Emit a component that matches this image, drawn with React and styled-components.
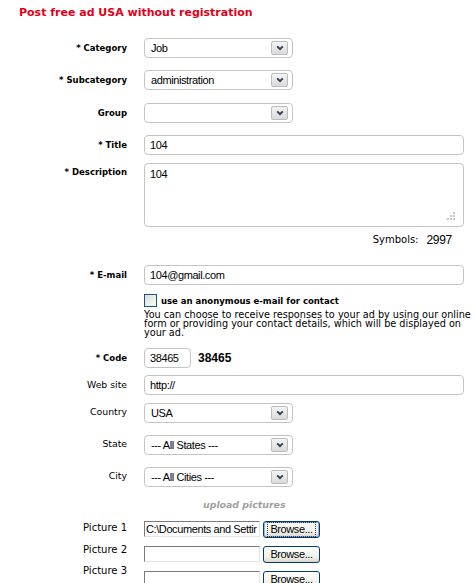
import React from 'react';
import styled, { createGlobalStyle } from 'styled-components';

const GlobalStyle = createGlobalStyle`
  body {
    margin: 0;
    background: #fff;
    font-family: "DejaVu Sans", Verdana, sans-serif;
    color: #000;
  }
`;

const arial = `
  font-family: "Liberation Sans", Arial, sans-serif;
  font-size: 11px;
  letter-spacing: -0.4px;
  color: #000;
`;

const Page = styled.div`
  width: 474px;
  height: 583px;
  overflow: hidden;
  padding-top: 7px;
  box-sizing: border-box;
`;

const Heading = styled.h1`
  margin: 0 0 0 19px;
  font-size: 11px;
  line-height: 12px;
  font-weight: bold;
  color: #e2001a;
`;

const Row = styled.div`
  display: flex;
  align-items: ${p => (p.$top ? 'flex-start' : 'center')};
  margin-top: ${p => p.$mt || 0}px;
`;

const Label = styled.div`
  width: 127px;
  flex-shrink: 0;
  text-align: right;
  font-size: ${p => (p.$plain ? '9.3px' : '8.5px')};
  font-weight: ${p => (p.$plain ? 'normal' : 'bold')};
  line-height: 12px;
  padding-top: ${p => p.$pt || 0}px;
  margin-top: ${p => p.$shift || 0}px;
`;

const Field = styled.div`
  margin-left: 17px;
  display: flex;
  align-items: center;
`;

const SelectBox = styled.div`
  width: 149px;
  height: 20px;
  box-sizing: border-box;
  border: 1px solid #c4c4c4;
  border-radius: 4px;
  background: #fff;
  display: flex;
  align-items: center;
  padding: 0 4px 0 6px;
  ${arial}
`;

const SelectText = styled.span`
  flex: 1;
  white-space: nowrap;
  overflow: hidden;
`;

const ArrowBtn = styled.span`
  width: 17px;
  height: 14px;
  box-sizing: border-box;
  border: 1px solid #bcbcbc;
  border-radius: 2px;
  background: linear-gradient(#f4f4f4, #dadada);
  display: flex;
  align-items: center;
  justify-content: center;
`;

const TextInput = styled.input`
  width: ${p => p.$w}px;
  height: 20px;
  box-sizing: border-box;
  border: 1px solid #c4c4c4;
  border-radius: 4px;
  padding: 0 5px;
  margin: 0;
  ${arial}
  outline: none;
`;

const AreaWrap = styled.div`
  position: relative;
  width: 320px;
  height: 64px;
`;

const TextArea = styled.textarea`
  width: 100%;
  height: 100%;
  box-sizing: border-box;
  border: 1px solid #c4c4c4;
  border-radius: 4px;
  padding: 4px 5px;
  margin: 0;
  resize: none;
  ${arial}
  outline: none;
  display: block;
`;

const Grip = styled.svg`
  position: absolute;
  right: 9px;
  bottom: 7px;
`;

const Counter = styled.div`
  margin-top: 7px;
  height: 12px;
  display: flex;
  justify-content: flex-end;
  align-items: center;
  padding-right: 22px;
  font-size: 10px;
  line-height: 12px;
`;

const CountNum = styled.span`
  margin-left: 8px;
  font-family: "Liberation Sans", Arial, sans-serif;
  font-size: 12px;
  letter-spacing: -0.3px;
`;

const Check = styled.span`
  width: 13px;
  height: 13px;
  box-sizing: border-box;
  border: 1px solid #1c5180;
  background: linear-gradient(135deg, #dcdcd7, #fbfbf9);
  display: inline-block;
`;

const CheckText = styled.span`
  margin-left: 4px;
  font-size: 8.5px;
  font-weight: bold;
  line-height: 12px;
`;

const Note = styled.p`
  margin: 3px 0 0 144px;
  font-size: 9.7px;
  line-height: 9px;
  width: 330px;
  white-space: pre-line;
`;

const CodeEcho = styled.span`
  margin-left: 7px;
  font-family: "Liberation Sans", Arial, sans-serif;
  font-size: 12px;
  font-weight: bold;
`;

const Section = styled.div`
  margin: 12px 0 0 203px;
  font-size: 9.4px;
  line-height: 12px;
  font-weight: bold;
  font-style: italic;
  color: #a0a0a0;
`;

const Pictures = styled.div`
  display: flex;
  margin-top: 6px;
`;

const PicLabels = styled.div`
  width: 127px;
  text-align: right;
  font-size: 10px;
  line-height: 21.5px;
`;

const PicFields = styled.div`
  margin-left: 17px;
  padding-top: 4px;
  display: flex;
  flex-direction: column;
  gap: 9px;
`;

const FileRow = styled.div`
  display: flex;
  align-items: center;
  height: 16px;
`;

const FileBox = styled.div`
  width: 116px;
  height: 16px;
  box-sizing: border-box;
  border-top: 1px solid #7a7a7a;
  border-left: 1px solid #7a7a7a;
  border-right: 1px solid #e4e4e4;
  border-bottom: 1px solid #e4e4e4;
  ${arial}
  line-height: 14px;
  white-space: nowrap;
  overflow: hidden;
  padding-left: 1px;
`;

const Browse = styled.span`
  margin-left: 3px;
  width: 57px;
  height: 17px;
  box-sizing: border-box;
  border: 1px solid #003c74;
  border-radius: 3px;
  background: linear-gradient(#ffffff, #f0f0ea 70%, #d8d4c8);
  box-shadow: ${p => (p.$focus ? 'inset 0 0 0 1px #97b7ea' : 'none')};
  display: flex;
  align-items: center;
  justify-content: center;
  ${arial}
  line-height: 13px;
`;

const BrowseText = styled.span`
  padding: 0 2px;
  outline: ${p => (p.$focus ? '1px dotted #333' : 'none')};
`;

const Chevron = () => (
  <svg width="8" height="6" viewBox="0 0 8 6">
    <path d="M1.2 1.3 L4 4.1 L6.8 1.3" fill="none" stroke="#2f3d58" strokeWidth="1.9" />
  </svg>
);

const Select = ({ value }) => (
  <SelectBox>
    <SelectText>{value}</SelectText>
    <ArrowBtn>
      <Chevron />
    </ArrowBtn>
  </SelectBox>
);

const selects = [
  { label: '* Category', value: 'Job', mt: 19 },
  { label: '* Subcategory', value: 'administration', mt: 12 },
  { label: 'Group', value: '', mt: 13 },
];

const places = [
  { label: 'Country', value: 'USA', mt: 8 },
  { label: 'State', value: '--- All States ---', mt: 12 },
  { label: 'City', value: '--- All Cities ---', mt: 12 },
];

const pictures = [
  { label: 'Picture 1', path: 'C:\\Documents and Settir', focus: true },
  { label: 'Picture 2', path: '' },
  { label: 'Picture 3', path: '' },
];

export default function App() {
  return (
    <>
      <GlobalStyle />
      <Page>
        <Heading>Post free ad USA without registration</Heading>

        {selects.map(s => (
          <Row key={s.label} $mt={s.mt}>
            <Label>{s.label}</Label>
            <Field>
              <Select value={s.value} />
            </Field>
          </Row>
        ))}

        <Row $mt={12}>
          <Label>* Title</Label>
          <Field>
            <TextInput $w={320} defaultValue="104" />
          </Field>
        </Row>

        <Row $mt={8} $top>
          <Label $pt={3}>* Description</Label>
          <Field>
            <AreaWrap>
              <TextArea defaultValue="104" />
              <Grip width="8" height="8" viewBox="0 0 8 8">
                {[[6, 0], [3, 3], [6, 3], [0, 6], [3, 6], [6, 6]].map(([x, y]) => (
                  <rect key={`${x}-${y}`} x={x} y={y} width="2" height="2" fill="#c8c8c8" />
                ))}
              </Grip>
            </AreaWrap>
          </Field>
        </Row>

        <Counter>
          Symbols:<CountNum>2997</CountNum>
        </Counter>

        <Row $mt={19}>
          <Label>* E-mail</Label>
          <Field>
            <TextInput $w={320} defaultValue="104@gmail.com" />
          </Field>
        </Row>

        <Row $mt={9}>
          <Label />
          <Field>
            <Check />
            <CheckText>use an anonymous e-mail for contact</CheckText>
          </Field>
        </Row>

        <Note>
          {'You can choose to receive responses to your ad by using our online\nform or providing your contact details, which will be displayed on\nyour ad.'}
        </Note>

        <Row $mt={11}>
          <Label>* Code</Label>
          <Field>
            <TextInput $w={47} defaultValue="38465" />
            <CodeEcho>38465</CodeEcho>
          </Field>
        </Row>

        <Row $mt={7}>
          <Label $plain>Web site</Label>
          <Field>
            <TextInput $w={320} defaultValue="http://" />
          </Field>
        </Row>

        {places.map(s => (
          <Row key={s.label} $mt={s.mt}>
            <Label $plain $shift={-2}>{s.label}</Label>
            <Field>
              <Select value={s.value} />
            </Field>
          </Row>
        ))}

        <Section>upload pictures</Section>

        <Pictures>
          <PicLabels>
            {pictures.map(p => (
              <div key={p.label}>{p.label}</div>
            ))}
          </PicLabels>
          <PicFields>
            {pictures.map(p => (
              <FileRow key={p.label}>
                <FileBox>{p.path}</FileBox>
                <Browse $focus={p.focus}>
                  <BrowseText $focus={p.focus}>Browse...</BrowseText>
                </Browse>
              </FileRow>
            ))}
          </PicFields>
        </Pictures>
      </Page>
    </>
  );
}
